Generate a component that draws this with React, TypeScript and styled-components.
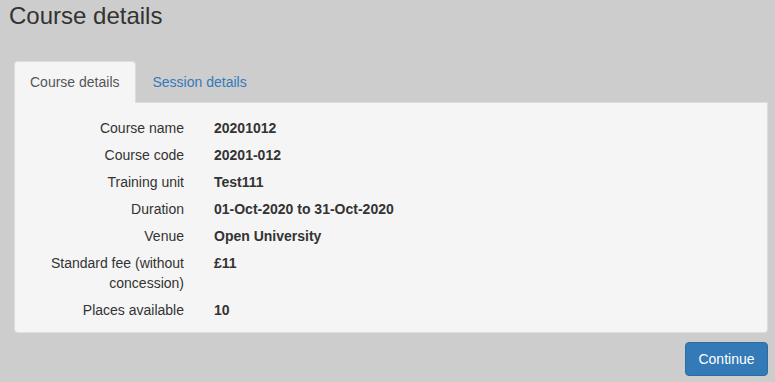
import styled, { createGlobalStyle } from "styled-components";

const GlobalStyle = createGlobalStyle`
  html, body {
    margin: 0;
    padding: 0;
    background: #cdcdcd;
  }
  body {
    font-family: "Liberation Sans", Arial, sans-serif;
    font-size: 14px;
    line-height: 20px;
    color: #333;
  }
  * {
    box-sizing: border-box;
  }
`;

interface Detail {
  label: string;
  value: string;
}

const details: Detail[] = [
  { label: "Course name", value: "20201012" },
  { label: "Course code", value: "20201-012" },
  { label: "Training unit", value: "Test111" },
  { label: "Duration", value: "01-Oct-2020 to 31-Oct-2020" },
  { label: "Venue", value: "Open University" },
  { label: "Standard fee (without concession)", value: "£11" },
  { label: "Places available", value: "10" },
];

export default function App() {
  return (
    <>
      <GlobalStyle />
      <Page>
        <Title>Course details</Title>
        <Body>
          <Tabs>
            <Tab active="true">Course details</Tab>
            <Tab>Session details</Tab>
          </Tabs>
          <Panel>
            {details.map((d) => (
              <Row key={d.label}>
                <Label>{d.label}</Label>
                <Value>{d.value}</Value>
              </Row>
            ))}
          </Panel>
          <Footer>
            <Button>Continue</Button>
          </Footer>
        </Body>
      </Page>
    </>
  );
}

const Page = styled.div`
  width: 775px;
  height: 382px;
  overflow: hidden;
`;

const Title = styled.h3`
  margin: 3px 0 0 9px;
  font-size: 24px;
  font-weight: 400;
  line-height: 26px;
  color: #333;
`;

const Body = styled.div`
  padding: 32px 7px 0 14px;
`;

const Tabs = styled.div`
  display: flex;
  gap: 1px;
  margin-bottom: -1px;
`;

const Tab = styled.div<{ active?: "true" }>`
  padding: 10px 15px;
  border: 1px solid transparent;
  border-bottom: none;
  border-radius: 4px 4px 0 0;
  cursor: pointer;
  position: relative;
  z-index: 1;

  ${({ active }) =>
    active
      ? `background-color: #f5f5f5; border-color: #ddd; color: #555; padding-bottom: 11px;`
      : `color: #337ab7;`};
`;

const Panel = styled.div`
  background: #f5f5f5;
  border: 1px solid #ddd;
  border-radius: 0 0 4px 4px;
  padding: 15px 0 4px;
  height: 231px;
`;

const Row = styled.div`
  display: grid;
  grid-template-columns: 155px 1fr;
  column-gap: 30px;
  padding-left: 14px;
  margin-bottom: 7px;
`;

const Label = styled.div`
  text-align: right;
`;

const Value = styled.div`
  font-weight: 700;
`;

const Footer = styled.div`
  display: flex;
  justify-content: flex-end;
  margin-top: 9px;
`;

const Button = styled.button`
  font-family: "Liberation Sans", Arial, sans-serif;
  font-size: 14px;
  line-height: 20px;
  padding: 6px 12px;
  height: 34px;
  width: 83px;
  color: #fff;
  background: #337ab7;
  border: 1px solid #2e6da4;
  border-radius: 4px;
  cursor: pointer;
`;
